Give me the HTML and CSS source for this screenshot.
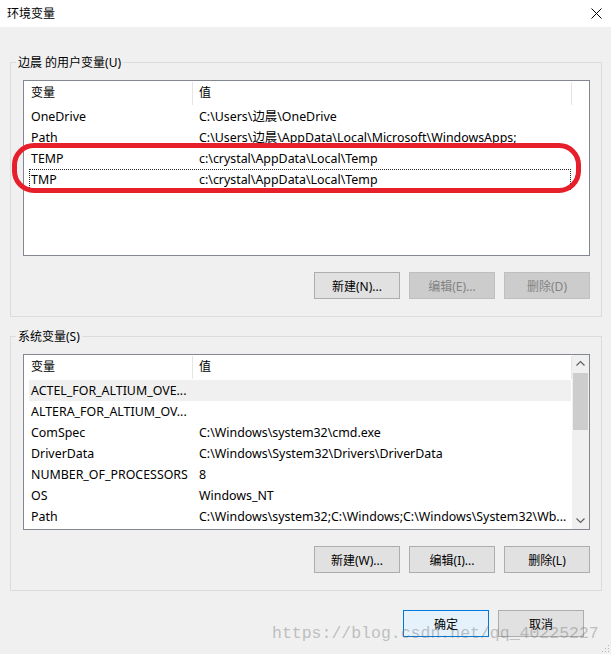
FILE: index.html
```html
<!DOCTYPE html>
<html>
<head>
  <title>环境变量</title>
  <link rel="stylesheet" href="styles.css">
</head>
<body>
  <!-- title bar -->
  <div class="titlebar">
    <span class="title">环境变量</span>
    <svg class="close" width="11" height="11" viewBox="0 0 11 11">
      <path d="M0.5 0.5 L10.5 10.5 M10.5 0.5 L0.5 10.5" stroke="#000" stroke-width="1" fill="none"/>
    </svg>
  </div>

  <!-- user variables -->
  <div class="group">
    <div class="group-label">边晨 的用户变量(U)</div>
    <div class="list">
      <div class="list-body">
        <div class="list-head">
          <div class="hcell name">变量</div>
          <div class="hcell value">值</div>
        </div>
        <div class="row"><div class="cell name">OneDrive</div><div class="cell value">C:\Users\边晨\OneDrive</div></div>
        <div class="row"><div class="cell name">Path</div><div class="cell value">C:\Users\边晨\AppData\Local\Microsoft\WindowsApps;</div></div>
        <div class="row"><div class="cell name">TEMP</div><div class="cell value">c:\crystal\AppData\Local\Temp</div></div>
        <div class="row focus"><div class="cell name">TMP</div><div class="cell value">c:\crystal\AppData\Local\Temp</div></div>
      </div>
    </div>
    <div class="buttons">
      <button>新建(N)...</button>
      <button disabled>编辑(E)...</button>
      <button disabled>删除(D)</button>
    </div>
  </div>

  <!-- system variables -->
  <div class="group second">
    <div class="group-label">系统变量(S)</div>
    <div class="list">
      <div class="list-body">
        <div class="list-head">
          <div class="hcell name">变量</div>
          <div class="hcell value">值</div>
        </div>
        <div class="row hover"><div class="cell name">ACTEL_FOR_ALTIUM_OVE...</div><div class="cell value"></div></div>
        <div class="row"><div class="cell name">ALTERA_FOR_ALTIUM_OV...</div><div class="cell value"></div></div>
        <div class="row"><div class="cell name">ComSpec</div><div class="cell value">C:\Windows\system32\cmd.exe</div></div>
        <div class="row"><div class="cell name">DriverData</div><div class="cell value">C:\Windows\System32\Drivers\DriverData</div></div>
        <div class="row"><div class="cell name">NUMBER_OF_PROCESSORS</div><div class="cell value">8</div></div>
        <div class="row"><div class="cell name">OS</div><div class="cell value">Windows_NT</div></div>
        <div class="row"><div class="cell name">Path</div><div class="cell value">C:\Windows\system32;C:\Windows;C:\Windows\System32\Wb...</div></div>
      </div>
      <div class="scrollbar">
        <svg class="arrow" width="17" height="17" viewBox="0 0 17 17">
          <path d="M4.5 10.5 L8.5 6.5 L12.5 10.5" stroke="#606060" stroke-width="1.2" fill="none"/>
        </svg>
        <div class="thumb-track"><div class="thumb"></div></div>
        <svg class="arrow" width="17" height="17" viewBox="0 0 17 17">
          <path d="M4.5 6.5 L8.5 10.5 L12.5 6.5" stroke="#606060" stroke-width="1.2" fill="none"/>
        </svg>
      </div>
    </div>
    <div class="buttons">
      <button>新建(W)...</button>
      <button>编辑(I)...</button>
      <button>删除(L)</button>
    </div>
  </div>

  <div class="footer">
    <button class="default">确定</button>
    <button>取消</button>
  </div>

  <!-- annotation + watermark over the dialog -->
  <div class="ring"></div>
  <div class="watermark">https://blog.csdn.net/qq_40225227</div>
  <svg class="grip" width="9" height="9" viewBox="0 0 9 9">
    <rect x="7" y="1" width="1" height="1" fill="#b4b4b4"/>
    <rect x="4" y="4" width="1" height="1" fill="#b4b4b4"/>
    <rect x="7" y="4" width="1" height="1" fill="#b4b4b4"/>
    <rect x="1" y="7" width="1" height="1" fill="#b4b4b4"/>
    <rect x="4" y="7" width="1" height="1" fill="#b4b4b4"/>
    <rect x="7" y="7" width="1" height="1" fill="#b4b4b4"/>
  </svg>
</body>
</html>
```

FILE: styles.css
```css
body {
  margin: 0;
  width: 611px;
  height: 654px;
  overflow: hidden;
  position: relative;
  background: #f0f0f0;
  font-family: 'Noto Sans', 'Noto Sans CJK SC', sans-serif;
  font-size: 12px;
  color: #000;
}

.titlebar {
  height: 27px;
  background: #fff;
  display: flex;
  align-items: center;
  justify-content: space-between;
  padding: 0 9px 0 7px;
}

.title {
  line-height: 14px;
}

.close {
  display: block;
}

/* group boxes */
.group {
  margin: 35px 9px 0 10px;
  border: 1px solid #dcdcdc;
  padding: 0 11px 17px 12px;
}

.group.second {
  margin-top: 19px;
}

.group-label {
  width: fit-content;
  margin: -7px 0 0 -7px;
  padding: 0 2px;
  height: 14px;
  line-height: 14px;
  background: #f0f0f0;
}

/* list views */
.list {
  margin-top: 10px;
  height: 176px;
  box-sizing: border-box;
  border: 1px solid #828790;
  background: #fff;
  display: flex;
}

.list-body {
  flex: 1;
  overflow: hidden;
}

.list-head {
  display: flex;
  height: 25px;
  line-height: 25px;
  padding-top: 1px;
  box-sizing: border-box;
}

.hcell {
  border-right: 1px solid #e5e5e5;
  height: 23px;
  line-height: 22px;
  box-sizing: border-box;
}

.hcell.name {
  width: 169px;
  padding-left: 7px;
}

.hcell.value {
  width: 379px;
  padding-left: 6px;
}

.row {
  display: flex;
  width: 542px;
  height: 21px;
  line-height: 21px;
  margin-left: 5px;
  white-space: nowrap;
  font-size: 12.4px;
}

.row.hover {
  background: #f0f0f0;
}

.row.focus {
  outline: 1px dotted #222;
  outline-offset: -1px;
}

.cell.name {
  width: 164px;
  padding-left: 2px;
  box-sizing: border-box;
}

.cell.value {
  flex: 1;
  padding-left: 6px;
}

.scrollbar {
  width: 17px;
  background: #f0f0f0;
  display: flex;
  flex-direction: column;
}

.arrow {
  display: block;
}

.thumb-track {
  flex: 1;
}

.thumb {
  height: 57px;
  margin: 1px 1px 0 1px;
  background: #cdcdcd;
}

/* buttons */
.buttons {
  display: flex;
  justify-content: flex-end;
  gap: 9px;
  margin-top: 16px;
}

button {
  width: 86px;
  height: 27px;
  margin: 0;
  padding: 0;
  border: 1px solid #adadad;
  background: #e1e1e1;
  font-family: 'Noto Sans', 'Noto Sans CJK SC', sans-serif;
  font-size: 12px;
  color: #000;
}

button:disabled {
  background: #cccccc;
  border-color: #bfbfbf;
  color: #838383;
}

button.default {
  border-color: #0078d7;
  background: #e5f1fb;
}

.footer {
  display: flex;
  justify-content: flex-end;
  gap: 9px;
  margin-top: 19px;
  padding-right: 27px;
}

/* red hand-drawn ring around TEMP / TMP */
.ring {
  position: absolute;
  left: 12px;
  top: 143px;
  width: 569px;
  height: 50px;
  box-sizing: border-box;
  border: 5px solid #e61f2b;
  border-radius: 22px;
}

.watermark {
  position: absolute;
  left: 272px;
  top: 624px;
  font-family: 'Liberation Mono', monospace;
  font-size: 16.5px;
  line-height: 20px;
  color: rgba(110, 110, 110, 0.4);
  white-space: nowrap;
}

.grip {
  position: absolute;
  right: 1px;
  bottom: 1px;
}
```
